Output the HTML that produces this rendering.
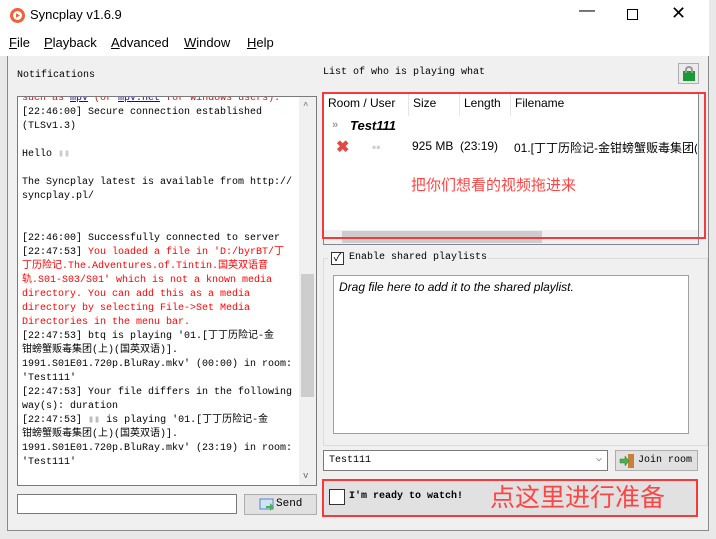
<!DOCTYPE html>
<html><head><meta charset="utf-8"><style>
*{box-sizing:border-box;margin:0;padding:0}
body{width:716px;height:539px;background:#e9e9e9;position:relative;overflow:hidden;font-family:"Liberation Sans","Noto Sans CJK SC",sans-serif}
.win{position:absolute;left:7px;top:0;width:702px;height:531px;background:#f0f0f0;border:1px solid #8a8a8a;border-top:none}
.a{position:absolute}
.mono{font-family:"Liberation Mono","Noto Sans CJK SC",monospace;font-size:10px;color:#000}
.tb{left:-7px;top:0;width:716px;height:30px;background:#fff}
.menu{left:-7px;top:30px;width:716px;height:26px;background:#fff;font-size:13px}
.menu span{position:absolute;top:5px}
u{text-decoration:underline}
.notes{left:10px;top:96px;width:300px;height:390px;background:#fff;border:1px solid #7a7a7a;overflow:hidden}
.notes div{line-height:14px;white-space:pre}
.r{color:#f00}
.bl{color:#00f;text-decoration:underline}
.btn{background:#e1e1e1;border:1px solid #adadad}
.tbl span{white-space:nowrap}
</style></head><body>
<div class="a tb">
<svg class="a" style="left:16px;top:7px" width="17" height="17" viewBox="0 0 17 17"><circle cx="8.5" cy="8.5" r="7.5" fill="#f4603a"/><circle cx="8.5" cy="8.5" r="4.5" fill="#fff"/><path d="M7 6.3 L11 8.5 L7 10.7Z" fill="#f4603a"/></svg>
<span class="a" style="left:37px;top:7px;font-size:13px">Syncplay v1.6.9</span>
<span class="a" style="left:586px;top:2px;font-size:16px">&#8212;</span>
<div class="a" style="left:634px;top:9px;width:11px;height:11px;border:1px solid #000"></div>
<span class="a" style="left:678px;top:3px;font-size:18px;font-weight:300">✕</span>
</div>
<div class="a menu">
<span style="left:16px"><u>F</u>ile</span><span style="left:51px"><u>P</u>layback</span><span style="left:118px"><u>A</u>dvanced</span><span style="left:191px"><u>W</u>indow</span><span style="left:254px"><u>H</u>elp</span>
</div>
<div class="win" style="top:56px;height:475px;border-top:none">
</div>
<div class="a mono" style="left:17px;top:70px">Notifications</div>
<div class="a notes mono" style="left:17px">
<div style="margin-top:-5px;padding-left:4px"><span class="r">such as </span><span class="bl">mpv</span><span class="r"> (or </span><span class="bl">mpv.net</span><span class="r"> for Windows users).</span>
[22:46:00] Secure connection established
(TLSv1.3)

Hello <span style="color:#ccc">▮▮</span>

The Syncplay latest is available from http://
syncplay.pl/


[22:46:00] Successfully connected to server
[22:47:53] <span class="r">You loaded a file in 'D:/byrBT/丁</span>
<span class="r">丁历险记.The.Adventures.of.Tintin.国英双语音</span>
<span class="r">轨.S01-S03/S01' which is not a known media</span>
<span class="r">directory. You can add this as a media</span>
<span class="r">directory by selecting File-&gt;Set Media</span>
<span class="r">Directories in the menu bar.</span>
[22:47:53] btq is playing '01.[丁丁历险记-金
钳螃蟹贩毒集团(上)(国英双语)].
1991.S01E01.720p.BluRay.mkv' (00:00) in room:
'Test111'
[22:47:53] Your file differs in the following
way(s): duration
[22:47:53] <span style="color:#bbb">▮▮</span> is playing '01.[丁丁历险记-金
钳螃蟹贩毒集团(上)(国英双语)].
1991.S01E01.720p.BluRay.mkv' (23:19) in room:
'Test111'</div>
<div class="a" style="right:0;top:0;width:17px;height:388px;background:#f0f0f0"><div class="a" style="left:2px;top:177px;width:13px;height:123px;background:#cdcdcd"></div><span class="a" style="left:4px;top:2px;font-size:9px;color:#666">^</span><span class="a" style="left:4px;bottom:2px;font-size:9px;color:#666">v</span></div>
</div>
<div class="a" style="left:17px;top:494px;width:220px;height:20px;background:#fff;border:1px solid #7a7a7a"></div>
<div class="a btn mono" style="left:244px;top:494px;width:73px;height:21px;font-size:11px;padding:3px 0 0 13px">
<svg class="a" style="left:14px;top:3px" width="16" height="14"><rect x="1" y="1" width="13" height="10" fill="#cfe3f7" stroke="#5785c5"/><path d="M7 8h4v-3l4 4-4 4v-3h-4z" fill="#4caf50"/></svg><span style="margin-left:18px">Send</span></div>

<div class="a mono" style="left:323px;top:67px">List of who is playing what</div>
<div class="a btn" style="left:678px;top:63px;width:21px;height:21px;background:#ebebeb"><div class="a" style="left:4px;top:7px;width:12px;height:10px;background:#1a9a34"></div><div class="a" style="left:6px;top:2px;width:8px;height:7px;border:2px solid #999;border-bottom:none;border-radius:4px 4px 0 0"></div></div>
<div class="a" style="left:323px;top:92px;width:376px;height:153px;background:#fff;border:1px solid #828790"></div>
<div class="a tbl" style="left:324px;top:96px;font-size:12px;color:#000">
<span class="a" style="left:4px;top:0">Room / User</span><span class="a" style="left:89px">Size</span><span class="a" style="left:140px">Length</span><span class="a" style="left:191px">Filename</span>
<div class="a" style="left:84px;top:-2px;width:1px;height:22px;background:#e5e5e5"></div><div class="a" style="left:135px;top:-2px;width:1px;height:22px;background:#e5e5e5"></div><div class="a" style="left:186px;top:-2px;width:1px;height:22px;background:#e5e5e5"></div>
<span class="a" style="left:8px;top:23px;color:#999;font-size:11px;font-weight:bold">»</span><span class="a" style="left:26px;top:22px;font-weight:bold;font-style:italic;font-size:13px">Test111</span>
<span class="a" style="left:12px;top:41px;color:#e84545;font-weight:bold;font-size:16px">✖</span><span class="a" style="left:48px;top:44px;color:#ccc">▪▪</span>
<span class="a" style="left:88px;top:43px">925 MB &nbsp;(23:19)</span>
<span class="a" style="left:190px;top:43px;width:183px;overflow:hidden">01.[丁丁历险记-金钳螃蟹贩毒集团(</span>
<span class="a" style="left:87px;top:78px;color:#f44;font-size:15px">把你们想看的视频拖进来</span>
</div>
<div class="a" style="left:324px;top:230px;width:374px;height:14px;background:#f0f0f0"><div class="a" style="left:18px;top:1px;width:200px;height:12px;background:#cdcdcd"></div></div>
<div class="a" style="left:322px;top:92px;width:384px;height:147px;border:2px solid #f43a3a"></div>

<div class="a" style="left:323px;top:258px;width:385px;height:188px;border:1px solid #dcdcdc"></div>
<div class="a" style="left:328px;top:250px;width:160px;height:16px;background:#f0f0f0"></div>
<div class="a" style="left:331px;top:252px;width:13px;height:13px;border:1px solid #333;background:#fff;font-size:11px;line-height:11px;text-align:center">✓</div>
<div class="a mono" style="left:349px;top:252px">Enable shared playlists</div>
<div class="a" style="left:333px;top:275px;width:356px;height:159px;background:#fff;border:1px solid #a0a0a0;font-size:12px;font-style:italic;padding:4px 5px">Drag file here to add it to the shared playlist.</div>

<div class="a mono" style="left:323px;top:450px;width:285px;height:21px;background:#fff;border:1px solid #7a7a7a;padding:4px 5px">Test111<span class="a" style="right:5px;top:2px;color:#555">⌵</span></div>
<div class="a btn mono" style="left:615px;top:450px;width:83px;height:21px;padding:4px 0 0 22px">Join room<svg class="a" style="left:3px;top:2px" width="17" height="16"><rect x="9" y="1" width="6" height="14" fill="#c8803a"/><path d="M1 6h5v-3l4 5-4 5v-3h-5z" fill="#4caf50" stroke="#2d7d32" stroke-width=".5"/></svg></div>

<div class="a btn" style="left:323px;top:480px;width:374px;height:36px;background:#e1e1e1"></div>
<div class="a" style="left:322px;top:479px;width:376px;height:38px;border:2px solid #f43a3a"></div>
<div class="a" style="left:329px;top:489px;width:16px;height:16px;background:#fff;border:1px solid #333"></div>
<div class="a mono" style="left:349px;top:491px;font-weight:bold;font-size:10px">I'm ready to watch!</div>
<div class="a" style="left:490px;top:482px;font-size:25px;color:#f44;white-space:nowrap;line-height:32px">点这里进行准备</div>
</body></html>
